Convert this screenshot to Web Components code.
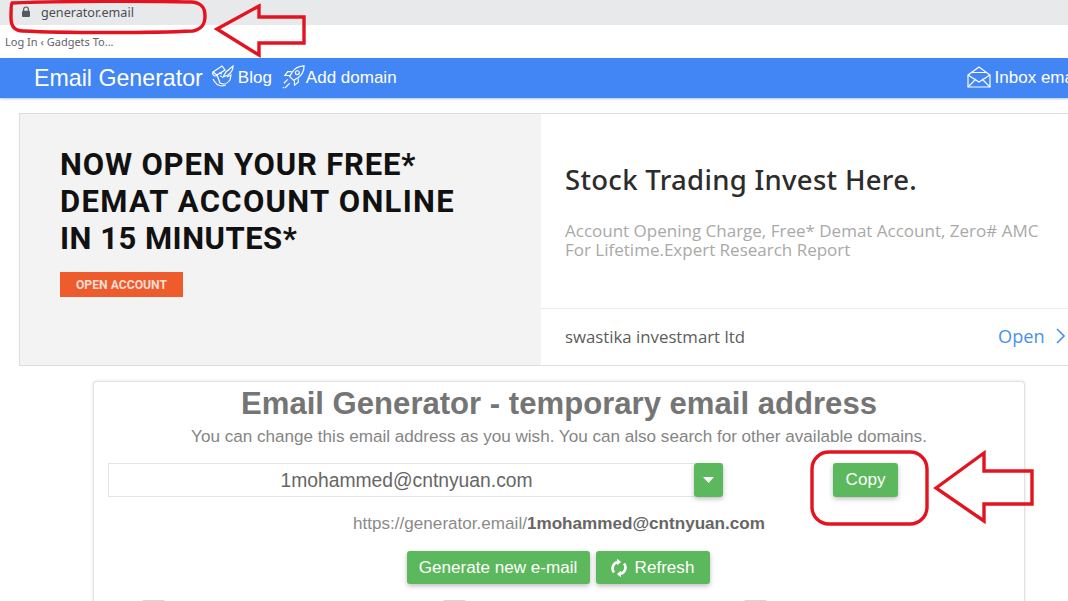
<!DOCTYPE html>
<html>
<head>
<meta charset="utf-8">
<title>Email Generator</title>
<style>
    html, body { margin: 0; padding: 0; height: 100%; overflow: hidden; background: #fff; }
    body { position: relative; width: 1068px; height: 601px; font-family: "Liberation Sans", Arial, sans-serif; }
</style>
</head>
<body>
<browser-chrome url="generator.email" bookmark="Log In ‹ Gadgets To..."></browser-chrome>
<top-nav></top-nav>
<ad-banner></ad-banner>
<generator-card></generator-card>
<red-notes></red-notes>

<script>
class BrowserChrome extends HTMLElement {
    constructor() {
        super();
        this.attachShadow({ mode: 'open' });
        this.shadowRoot.innerHTML = `
            <style>
                :host { display: block; height: 58px; font-family: "Noto Sans", "Open Sans", sans-serif; }
                #bar {
                    height: 25px;
                    background: #e8e9eb;
                    display: flex;
                    align-items: center;
                    padding-left: 21px;
                    gap: 10px;
                    font-size: 12.6px;
                    color: #4a4d51;
                }
                #bar svg { margin-top: -2px; }
                #bar span { margin-top: -1px; }
                #marks {
                    height: 33px;
                    background: #fff;
                    padding: 9px 0 0 5px;
                    box-sizing: border-box;
                    font-size: 11px;
                    line-height: 15px;
                    color: #5f6368;
                }
            </style>
            <div id="bar">
                <svg width="10" height="12" viewBox="0 0 10 12">
                    <path d="M2.6 5V3.4a2.4 2.4 0 0 1 4.8 0V5" fill="none" stroke="#55585c" stroke-width="1.2"/>
                    <rect x="1" y="4.8" width="8" height="6.2" rx="1" fill="#55585c"/>
                </svg>
                <span id="url"></span>
            </div>
            <div id="marks"></div>
        `;
    }

    connectedCallback() {
        this.shadowRoot.querySelector('#url').textContent = this.getAttribute('url');
        this.shadowRoot.querySelector('#marks').textContent = this.getAttribute('bookmark');
    }
}

class TopNav extends HTMLElement {
    constructor() {
        super();
        this.attachShadow({ mode: 'open' });
        this.shadowRoot.innerHTML = `
            <style>
                :host {
                    display: flex;
                    align-items: center;
                    height: 40px;
                    background: #4285f4;
                    box-shadow: 0 1px 2px rgba(66, 133, 244, 0.45);
                    color: #fff;
                    overflow: hidden;
                    white-space: nowrap;
                    font-family: "Liberation Sans", Arial, sans-serif;
                    font-size: 17px;
                    padding-left: 34px;
                    position: relative;
                }
                #brand { font-size: 23.2px; margin-right: 8px; }
                svg { fill: none; stroke: #fff; stroke-width: 1.2; flex: none; }
                a { margin-right: 9px; margin-left: 3px; }
                #inbox { margin-left: 561px; display: flex; align-items: center; gap: 4px; flex: none; }
                #inbox a { margin: 0; }
            </style>
            <span id="brand">Email Generator</span>
            <svg width="24" height="24" viewBox="0 0 24 24" style="margin-top:-5px">
                <path d="M2 8l9-6 3 4-8 5zM2 8c-1 2 0 4 3 4l1-1"/>
                <path d="M6 11l3 8c3 2 7 1 10-3l1-5-4 2"/>
                <path d="M12 13l3-5 7-6c0 4-2 7-5 9l-5 2z"/>
                <path d="M8 9l3 1M9 12l2 .5M2 15c2 4 5 7 9 7l4-1"/>
            </svg>
            <a>Blog</a>
            <svg width="25" height="25" viewBox="0 0 26 26" style="margin-top:-3px">
                <path d="M24 2c-5 0-9 2-12 6l-3 5 4 4 5-3c4-3 6-7 6-12z"/>
                <circle cx="17" cy="9" r="2"/>
                <path d="M11 8H7l-3 4h5M18 15v4l-4 3v-5"/>
                <path d="M7 16l-4 4M9 20l-5 5M2 25l1-1"/>
            </svg>
            <a style="margin-left:0">Add domain</a>
            <div id="inbox">
                <svg width="24" height="22" viewBox="0 0 24 22" stroke-width="1.6" style="margin-top:-3px">
                    <path d="M1 9L12 1l11 8v12H1z"/>
                    <path d="M1 9l11 7 11-7M1 21l8-8M23 21l-8-8M5 6.500h14"/>
                </svg>
                <a>Inbox email</a>
            </div>
        `;
    }
}

class AdBanner extends HTMLElement {
    constructor() {
        super();
        this.attachShadow({ mode: 'open' });
        this.shadowRoot.innerHTML = `
            <style>
                :host {
                    display: grid;
                    grid-template-columns: 521px 1fr;
                    width: 1060px;
                    height: 253px;
                    box-sizing: border-box;
                    margin: 15px 0 0 19px;
                    border: 1px solid #dcdcdc;
                    background: #fff;
                    overflow: hidden;
                }
                #left {
                    background: #f3f3f3;
                    padding: 32px 0 0 40px;
                    font-family: Roboto, "Liberation Sans", sans-serif;
                }
                h2 {
                    margin: 0;
                    font-size: 31px;
                    line-height: 37px;
                    font-weight: 700;
                    color: #111;
                    white-space: nowrap;
                }
                h2 span { display: block; }
                #cta {
                    display: block;
                    width: 123px;
                    height: 25px;
                    margin-top: 15px;
                    background: #ee5b2c;
                    color: #f9ded3;
                    font-size: 12.2px;
                    font-weight: 700;
                    line-height: 26px;
                    text-align: center;
                    box-sizing: border-box;
                }
                #right {
                    display: flex;
                    flex-direction: column;
                    font-family: "Open Sans", "Noto Sans", sans-serif;
                }
                #copy { height: 195px; box-sizing: border-box; padding: 48px 0 0 24px; border-bottom: 1px solid #ececec; }
                h3 {
                    margin: 0;
                    font-family: "Noto Sans", sans-serif;
                    font-size: 27.5px;
                    line-height: 36px;
                    font-weight: 500;
                    color: #2c2c2c;
                    letter-spacing: 0.3px;
                }
                p {
                    margin: 23px 0 0;
                    font-size: 17px;
                    line-height: 19px;
                    color: #a9a9a9;
                    white-space: nowrap;
                }
                #foot {
                    flex: 1;
                    display: flex;
                    align-items: center;
                    padding: 0 0 2px 24px;
                    font-size: 16.8px;
                    color: #5c5c5c;
                    white-space: nowrap;
                }
                #open { position: absolute; left: 998px; color: #4a90f0; font-size: 18.2px; display: flex; align-items: center; gap: 11px; }
            </style>
            <div id="left">
                <h2>
                    <span style="letter-spacing:.83px">NOW OPEN YOUR FREE*</span>
                    <span style="letter-spacing:1.3px">DEMAT ACCOUNT ONLINE</span>
                    <span style="letter-spacing:.5px">IN 15 MINUTES*</span>
                </h2>
                <span id="cta">OPEN ACCOUNT</span>
            </div>
            <div id="right">
                <div id="copy">
                    <h3>Stock Trading Invest Here.</h3>
                    <p>Account Opening Charge, Free* Demat Account, Zero# AMC<br>For Lifetime.Expert Research Report</p>
                </div>
                <div id="foot">
                    <span>swastika investmart ltd</span>
                    <span id="open">Open
                        <svg width="9" height="16" viewBox="0 0 9 16"><path d="M1 1l7 7-7 7" fill="none" stroke="#4a90f0" stroke-width="1.600"/></svg>
                    </span>
                </div>
            </div>
        `;
    }
}

class GreenButton extends HTMLElement {
    constructor() {
        super();
        this.attachShadow({ mode: 'open' });
        this.shadowRoot.innerHTML = `
            <style>
                :host {
                    display: inline-flex;
                    align-items: center;
                    justify-content: center;
                    gap: 8px;
                    height: 33px;
                    box-sizing: border-box;
                    background: #5cb85c;
                    color: #fff;
                    border-radius: 3px;
                    font-size: 17.1px;
                    box-shadow: 0 2px 5px rgba(0, 0, 0, 0.26);
                    white-space: nowrap;
                }
            </style>
            <slot></slot>
        `;
    }
}

class GeneratorCard extends HTMLElement {
    constructor() {
        super();
        this.attachShadow({ mode: 'open' });
        this.shadowRoot.innerHTML = `
            <style>
                :host {
                    display: block;
                    width: 932px;
                    height: 240px;
                    box-sizing: border-box;
                    margin: 15px 0 0 93px;
                    border: 1px solid #e2e2e2;
                    border-bottom: 0;
                    border-radius: 4px 4px 0 0;
                    box-shadow: 0 0 3px rgba(0, 0, 0, 0.12);
                    font-family: "Liberation Sans", Arial, sans-serif;
                    color: #777;
                    text-align: center;
                    background: #fff;
                    overflow: hidden;
                }
                h1 { margin: 0; padding-top: 4px; font-size: 31.1px; line-height: 36px; font-weight: 700; color: #757575; }
                #hint { margin: 5px 0 0; font-size: 17.1px; line-height: 20px; color: #858585; white-space: nowrap; }
                #row { display: flex; margin: 16px 0 0 14px; height: 34px; }
                #input {
                    width: 586px;
                    box-sizing: border-box;
                    border: 1px solid #e4e4e4;
                    border-right: 0;
                    padding-left: 10px;
                    font-size: 19.3px;
                    line-height: 33px;
                    color: #666;
                }
                #drop { width: 29px; height: 34px; }
                #copy { width: 65px; height: 34px; margin-left: 110px; }
                #link { margin: 17px 0 0; font-size: 17.1px; line-height: 20px; color: #8a8a8a; }
                #link b { color: #666; }
                #actions { display: flex; justify-content: center; gap: 6px; margin: 17px 0 0 -2px; }
                #gen { width: 183px; }
                #refresh { width: 114px; }
                #stubs { position: relative; }
                .stub { position: absolute; top: 16px; width: 25px; height: 6px; background: #fff; border: 1px solid #d6d6d6; border-radius: 4px; }
            </style>
            <h1>Email Generator - temporary email address</h1>
            <p id="hint">You can change this email address as you wish. You can also search for other available domains.</p>
            <div id="row">
                <div id="input">1mohammed@cntnyuan.com</div>
                <green-button id="drop">
                    <svg width="11" height="6" viewBox="0 0 11 6"><path d="M0 0h11L5.500 6z" fill="#fff"/></svg>
                </green-button>
                <green-button id="copy">Copy</green-button>
            </div>
            <p id="link">https://generator.email/<b>1mohammed@cntnyuan.com</b></p>
            <div id="actions">
                <green-button id="gen">Generate new e-mail</green-button>
                <green-button id="refresh">
                    <svg width="16" height="18" viewBox="0 0 16 18" fill="none" stroke="#fff" stroke-width="2.600">
                        <path d="M3 13.500A6.500 6.500 0 0 1 6 3.200"/>
                        <path d="M13 4.500A6.500 6.500 0 0 1 10 14.800"/>
                        <path d="M6.500 0.500v5l3-2.500zM9.500 17.500v-5l-3 2.500z" fill="#fff" stroke-width="1"/>
                    </svg>
                    Refresh
                </green-button>
            </div>
            <div id="stubs">
                <div class="stub" style="left:46px"></div>
                <div class="stub" style="left:347px"></div>
                <div class="stub" style="left:648px"></div>
            </div>
        `;
    }
}

// the red marks somebody drew over the screenshot
class RedNotes extends HTMLElement {
    constructor() {
        super();
        this.attachShadow({ mode: 'open' });
        this.shadowRoot.innerHTML = `
            <style>
                :host { position: absolute; left: 0; top: 0; width: 1068px; height: 601px; pointer-events: none; }
                svg { display: block; }
                path, rect { fill: none; stroke: #e3141f; stroke-width: 3.4; stroke-linejoin: miter; }
            </style>
            <svg width="1068" height="601" viewBox="0 0 1068 601">
                <path d="M12 3C60 1 150 1 192 2c10 1 13 6 13 14s-3 13-12 15c-40 2-130 2-170 0-8 0-12-4-12-13 0-9 0-14 1-15z"/>
                <path d="M217 29L259 6v11h45v26h-45v12z"/>
                <rect x="812" y="452" width="115" height="72" rx="17"/>
                <path d="M936 488L984 453v18h48v33h-48v17z"/>
            </svg>
        `;
    }
}

customElements.define('browser-chrome', BrowserChrome);
customElements.define('top-nav', TopNav);
customElements.define('ad-banner', AdBanner);
customElements.define('green-button', GreenButton);
customElements.define('generator-card', GeneratorCard);
customElements.define('red-notes', RedNotes);
</script>
</body>
</html>
